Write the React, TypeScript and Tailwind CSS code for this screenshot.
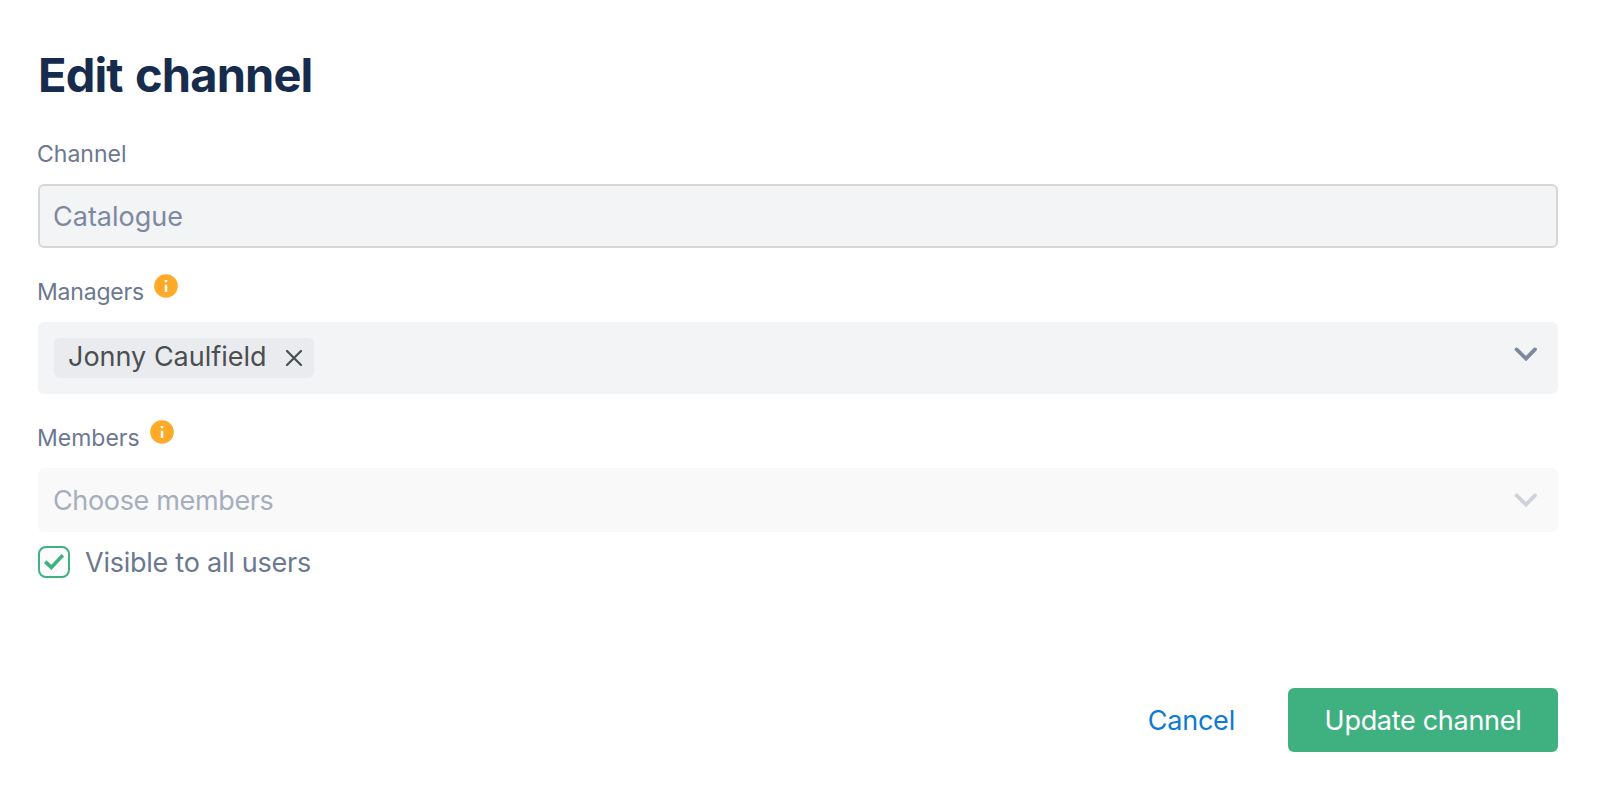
import type { ReactNode } from "react";

function InfoIcon() {
  return (
    <svg className="h-6 w-6" viewBox="0 0 24 24" aria-hidden>
      <circle cx="12" cy="12" r="11.8" fill="#ffa928" />
      <path d="M10.8 6h2.4v2.3h-2.4zM10.8 10.8h2.4V18h-2.4z" fill="#fff" />
    </svg>
  );
}

function ChevronIcon({ className }: { className: string }) {
  return (
    <svg className={`h-[14px] w-[23px] ${className}`} viewBox="0 0 23 14" fill="none" aria-hidden>
      <path d="M2.6 2.4 12 11.6 21 2.4" stroke="currentColor" strokeWidth="3.8" strokeLinecap="round" />
    </svg>
  );
}

function FieldLabel({ children, info }: { children: ReactNode; info?: boolean }) {
  return (
    <div className="mb-[14px] -ml-px flex h-8 items-start gap-[10px] text-[23px] leading-8 text-[#6b7890]">
      {children}
      {info && <div className="-mt-[2px]"><InfoIcon /></div>}
    </div>
  );
}

export default function App() {
  return (
    <main className="flex h-[794px] w-[1600px] flex-col bg-white pt-[45px] pr-[42px] pl-[38px] font-['Inter',sans-serif] text-[27px]">
      <h1 className="mb-[33px] text-[47px] leading-[60px] font-bold tracking-[-0.85px] text-[#172b4d] [word-spacing:2px]">Edit channel</h1>

      <FieldLabel><span>Channel</span></FieldLabel>
      <div className="mb-7 flex h-16 items-center rounded-md border-2 border-[#d6d6d6] bg-[#f3f4f6] px-[13px] pt-[2px] text-[#7d899f]">
        Catalogue
      </div>

      <FieldLabel info><span className="tracking-[-0.2px]">Managers</span></FieldLabel>
      <div className="mb-7 flex h-[72px] items-center justify-between rounded-md bg-[#f3f4f6] pr-[21px] pl-4">
        <div className="flex h-10 w-[260px] items-start justify-between rounded-md bg-[#eaebee] pr-3 pl-[14px] leading-[38px] text-[#4a4f52]">
          <span>Jonny Caulfield</span>
          <svg className="mt-3 h-4 w-4" viewBox="0 0 16 16" fill="none" aria-hidden>
            <path d="M1 1 15 15M15 1 1 15" stroke="currentColor" strokeWidth="2.2" strokeLinecap="round" />
          </svg>
        </div>
        <ChevronIcon className="-mt-2 text-[#7d89a0]" />
      </div>

      <FieldLabel info><span>Members</span></FieldLabel>
      <div className="mb-[14px] flex h-16 items-center justify-between rounded-md bg-[#f9f9f9] pr-[21px] pl-[15px] text-[#a6aebd]">
        <span className="pt-[2px] tracking-[-0.35px]">Choose members</span>
        <ChevronIcon className="text-[#cfd2db]" />
      </div>

      <label className="flex h-8 items-center gap-[15px] leading-8 text-[#6b7890]">
        <svg className="h-8 w-8" viewBox="0 0 32 32" fill="none" aria-hidden>
          <rect x="1" y="1" width="30" height="30" rx="7" fill="#fcfcfd" stroke="#3fb282" strokeWidth="2" />
          <path d="M7.2 15.6 13.3 21.4 24.8 9.2" stroke="#3fb282" strokeWidth="3.6" />
        </svg>
        <span className="pt-[2px] tracking-[-0.25px]">Visible to all users</span>
      </label>

      <div className="mt-[110px] flex h-16 items-center justify-end">
        <button className="mr-[53px] pt-[2px] leading-[62px] tracking-[-0.2px] text-[#0c7bd1]">Cancel</button>
        <button className="h-16 w-[270px] rounded-md bg-[#3fb181] pt-[2px] leading-[62px] tracking-[-0.3px] text-white">
          Update channel
        </button>
      </div>
    </main>
  );
}
